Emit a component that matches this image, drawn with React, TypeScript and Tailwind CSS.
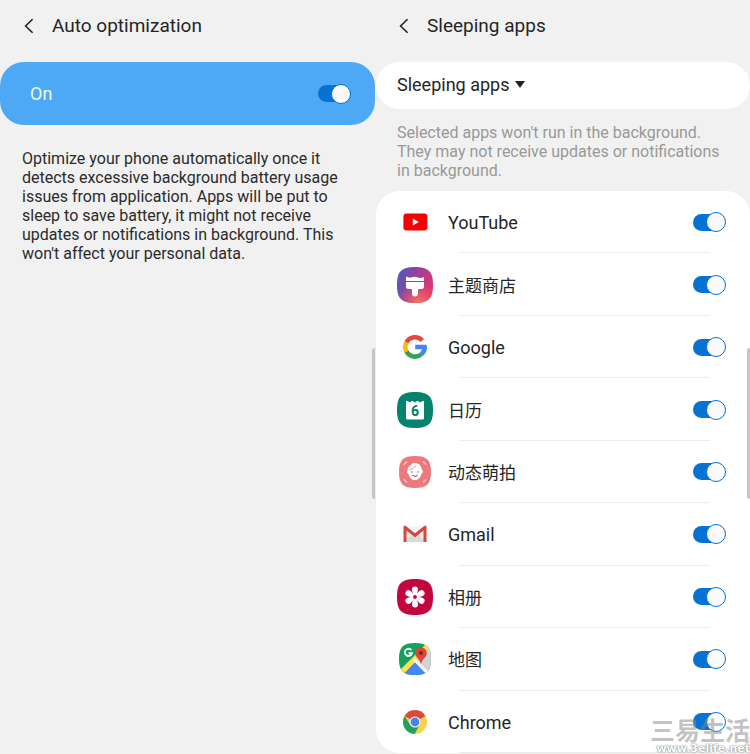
import type { ReactNode } from "react";

const CJK = "font-['Roboto','Noto_Sans_CJK_SC',sans-serif]";

function Toggle({ id, label }: { id: string; label: string }) {
  return (
    <span className="relative inline-flex h-5 w-[33px] shrink-0 items-center">
      <input
        id={id}
        type="checkbox"
        role="switch"
        aria-label={label}
        defaultChecked
        className="peer m-0 h-[17px] w-8 cursor-pointer appearance-none rounded-full bg-[#9a9a9a] checked:bg-[#0672d2]"
      />
      <span className="pointer-events-none absolute top-0 left-0 size-5 rounded-full border border-[#9a9a9a] bg-[#fafafa] peer-checked:right-0 peer-checked:left-auto peer-checked:border-[#0672d2]" />
    </span>
  );
}

function Header({ title }: { title: string }) {
  return (
    <header className="flex h-[62px] items-center gap-4 pb-[10px] pl-[22px]">
      <button type="button" aria-label="Back" className="flex size-[14px] items-center justify-center">
        <svg viewBox="0 0 14 16" className="h-4 w-[14px] shrink-0" fill="none" stroke="#222" strokeWidth="1.6">
          <path d="M10.6 1.2 3.6 8l7 6.8" />
        </svg>
      </button>
      <h1 className="text-[19px] leading-6 text-[#252525]">{title}</h1>
    </header>
  );
}

const SQUIRCLE = "M18 0C31.5 0 36 4.5 36 18S31.5 36 18 36 0 31.5 0 18 4.5 0 18 0Z";

function Icon({ children }: { children: ReactNode }) {
  return (
    <svg viewBox="0 0 36 36" className="size-9 shrink-0" aria-hidden="true">
      {children}
    </svg>
  );
}

const youtube = (
  <Icon>
    <rect x="6.400" y="9.600" width="24" height="16.800" rx="3.200" fill="#f80000" />
    <path d="M15.800 14.500v7l6-3.500Z" fill="#fff" />
  </Icon>
);

const themes = (
  <Icon>
    <defs>
      <linearGradient id="theme-a" x1="0" y1="0.2" x2="1" y2="0.6">
        <stop offset="0" stopColor="#4a5bbd" />
        <stop offset="0.5" stopColor="#a03f98" />
        <stop offset="1" stopColor="#e6366c" />
      </linearGradient>
      <radialGradient id="theme-b" cx="0.6" cy="1.02" r="0.6">
        <stop offset="0" stopColor="#ff7a55" />
        <stop offset="1" stopColor="#f0596a" stopOpacity="0" />
      </radialGradient>
    </defs>
    <path d={SQUIRCLE} fill="url(#theme-a)" />
    <path d={SQUIRCLE} fill="url(#theme-b)" />
    <path d="M9 9.500q3 1.800 6 .8t6 .2q3 1 6-.6v4H9Z" fill="#fff" />
    <path d="M9 15h18v4.500q0 2.500-2.500 2.500h-2.500q-1 0-1 1.200v3.400a3 3 0 0 1-6 0v-3.400q0-1.200-1-1.200h-2.500Q9 22 9 19.500Z" fill="#fff" />
  </Icon>
);

const google = (
  <Icon>
    <g fill="none" strokeWidth="4.600">
      <path d="M25.300 11.500A9.700 9.700 0 0 0 9.500 13.400" stroke="#e8453c" />
      <path d="M9.500 13.400a9.700 9.700 0 0 0 0 9.200" stroke="#fbbb0b" />
      <path d="M9.500 22.600a9.700 9.700 0 0 0 15 2.500" stroke="#34a353" />
      <path d="M24.500 25.100A9.300 9.300 0 0 0 27.600 18" stroke="#4286f3" />
    </g>
    <path d="M18.200 15.700h11.500q.3 2.400-.2 4.600H18.200Z" fill="#4286f3" />
  </Icon>
);

const calendar = (
  <Icon>
    <path d={SQUIRCLE} fill="#06836f" />
    <path d="M9 9h2a1.900 1.900 0 0 0 3.600 0h1.600a1.900 1.900 0 0 0 3.600 0h1.600a1.900 1.900 0 0 0 3.600 0h2v17q0 1.500-1.500 1.500h-15Q9 27.500 9 26Z" fill="#fff" />
    <text x="18" y="24" textAnchor="middle" fontSize="14" fontWeight="700" fontFamily="Roboto, sans-serif" fill="#087765">
      6
    </text>
  </Icon>
);

const emoji = (
  <Icon>
    <path transform="translate(2 2) scale(.889)" d={SQUIRCLE} fill="#ec7a7c" />
    <path d="M10.600 16.500C10.600 12 14 11.500 15.500 9.300c4.300-1 8.800.7 9.300 6.500 1.500 0 1.500 3.800-.3 4-1 4-3.500 6.300-6.500 6.300s-5.700-2.400-6.600-6.400c-1.600-.2-1.800-2.800-.8-3.200Z" fill="#fff" />
    <path d="M12 15.600c3-.3 6-2 7.300-4.500" fill="none" stroke="#ec7a7c" strokeWidth=".8" />
    <g fill="none" stroke="#9f4850" strokeWidth="1" strokeLinecap="round">
      <path d="M15 17.600v.8M21 17.600v.8M15.500 21.500q2.500 2 5 0" />
    </g>
    <path d="M6.800 10.600 10 7.600M26 7.600l3.200 3M6.800 25.400l3.200 3M26 28.400l3.200-3" stroke="#ffd5d3" strokeWidth="1.300" />
  </Icon>
);

const gmail = (
  <Icon>
    <path d="M7 10h22v16H7Z" fill="#e9e9e9" />
    <path d="m7 26 8.500-8 2.500 2 2.500-2 8.500 8Z" fill="#d9d9d9" />
    <path d="m8 10 10 8 10-8Z" fill="#f6f6f6" />
    <path d="M6.500 11q0-1.600 1.600-1.600L18 17.300l9.900-7.900q1.600 0 1.600 1.600v15h-3V14.600L18 21.300l-8.500-6.700V26h-3Z" fill="#d5473c" />
  </Icon>
);

const gallery = (
  <Icon>
    <path d={SQUIRCLE} fill="#c2063f" />
    {[0, 60, 120, 180, 240, 300].map((angle) => (
      <path key={angle} transform={`rotate(${angle} 18 18)`} d="M16.500 16.500c-.3-2.400-1.500-3.800-1.500-6.100a3 3 0 0 1 6 0c0 2.300-1.200 3.700-1.500 6.100Z" fill="#fff" />
    ))}
    <circle cx="18" cy="18" r="2.700" fill="#c2063f" stroke="#fff" strokeWidth="1.600" />
  </Icon>
);

const maps = (
  <Icon>
    <defs>
      <clipPath id="map-shape">
        <path transform="translate(2 2) scale(.889)" d={SQUIRCLE} />
      </clipPath>
    </defs>
    <g clipPath="url(#map-shape)">
      <path d="M0 0h36v36H0Z" fill="#15a05b" />
      <path d="M36 3v33L19 19Z" fill="#d3d3d3" />
      <path d="M0 32 32 0l3 4L5 35Z" fill="#f9de58" />
      <path d="m18 17 18 18-3 3-17-18Z" fill="#f4f4f4" />
      <path d="M4 36 18 21.500 32 36Z" fill="#4487f5" />
    </g>
    <path d="M14.400 9.200a3.600 3.600 0 1 0 .6 3h-3.400" fill="none" stroke="#fff" strokeWidth="1.900" />
    <path d="M24 6.200a5.800 5.800 0 0 1 5.800 5.800c0 4.500-4.800 5.500-5.800 11.500-1-6-5.800-7-5.800-11.500A5.800 5.800 0 0 1 24 6.200Z" fill="#da4638" />
    <circle cx="24" cy="12" r="2.100" fill="#7d2822" />
  </Icon>
);

const chrome = (
  <Icon>
    <circle cx="18" cy="18" r="12" fill="#fbd04b" />
    <path d="M18 18 7.600 12A12 12 0 0 1 28.400 12Z" fill="#d94b3e" />
    <path d="M7.600 12A12 12 0 0 0 17.500 30l5.300-9.300L13 20.500Z" fill="#22a060" />
    <circle cx="18" cy="18" r="5.600" fill="#f5f5f5" />
    <circle cx="18" cy="18" r="4.400" fill="#4586ef" />
  </Icon>
);

const LATIN_NAME = "text-lg leading-6";
const CHINESE_NAME = "text-[17px] leading-6";

const apps: { id: string; name: string; size: string; icon: ReactNode }[] = [
  { id: "youtube", name: "YouTube", size: LATIN_NAME, icon: youtube },
  { id: "themes", name: "主题商店", size: CHINESE_NAME, icon: themes },
  { id: "google", name: "Google", size: LATIN_NAME, icon: google },
  { id: "calendar", name: "日历", size: CHINESE_NAME, icon: calendar },
  { id: "emoji", name: "动态萌拍", size: CHINESE_NAME, icon: emoji },
  { id: "gmail", name: "Gmail", size: LATIN_NAME, icon: gmail },
  { id: "gallery", name: "相册", size: CHINESE_NAME, icon: gallery },
  { id: "maps", name: "地图", size: CHINESE_NAME, icon: maps },
  { id: "chrome", name: "Chrome", size: LATIN_NAME, icon: chrome },
];

function ScrollBar() {
  return <div className="absolute top-[348px] right-0 h-[151px] w-[3px] rounded-l bg-[#c9c3c1]" />;
}

function AutoOptimization() {
  return (
    <section className="relative">
      <Header title="Auto optimization" />
      <div className="flex h-[63px] items-center justify-between rounded-[24px] bg-[#4da9f5] pr-6 pl-[30px]">
        <label htmlFor="auto" className="text-lg text-[#edf8ff]">
          On
        </label>
        <Toggle id="auto" label="Auto optimization" />
      </div>
      <p className="mt-6 pr-6 pl-[22px] text-base leading-[19px] text-[#2b2b2b]">
        Optimize your phone automatically once it detects excessive background battery usage issues from application.
        Apps will be put to sleep to save battery, it might not receive updates or notifications in background. This
        won't affect your personal data.
      </p>
      <ScrollBar />
    </section>
  );
}

function SleepingApps() {
  return (
    <section className="relative">
      <Header title="Sleeping apps" />
      <div className="ml-px flex h-[47px] items-center rounded-[24px] bg-white pb-0.5 pl-[21px]">
        <div className="relative flex items-center">
          <select aria-label="App list" className="field-sizing-content cursor-pointer appearance-none bg-transparent pr-4 text-lg text-[#252525]">
            <option>Sleeping apps</option>
            <option>Deep sleeping apps</option>
          </select>
          <svg viewBox="0 0 10 7" className="pointer-events-none absolute right-0 h-[7px] w-[10px]" fill="#222" aria-hidden="true">
            <path d="M0 0h10L5 7Z" />
          </svg>
        </div>
      </div>
      <p className="mt-[14px] pr-5 pl-[22px] text-base leading-[19px] text-[#999]">
        Selected apps won't run in the background. They may not receive updates or notifications in background.
      </p>
      <ul className="mt-[11px] ml-px grid h-[562px] auto-rows-fr rounded-[24px] bg-white">
        {apps.map((app) => (
          <li key={app.id} className="relative flex items-center pr-6 pl-[21px]">
            {app.icon}
            <label htmlFor={app.id} className={`ml-[15px] flex-1 pt-0.5 text-[#252525] ${app.size}`}>
              {app.name}
            </label>
            <Toggle id={app.id} label={app.name} />
            <span className="absolute right-10 bottom-0 left-[83px] h-px bg-[#ececec]" />
          </li>
        ))}
      </ul>
      <ScrollBar />
    </section>
  );
}

export default function App() {
  return (
    <main className={`relative grid min-h-screen grid-cols-2 overflow-hidden bg-[#f1f1f1] ${CJK}`}>
      <AutoOptimization />
      <SleepingApps />
      <div className="pointer-events-none absolute right-0 bottom-0 flex flex-col items-end whitespace-nowrap">
        <span className="text-[25px] leading-6 font-bold text-[#888]/50">三易生活</span>
        <span className="font-['DejaVu_Sans',sans-serif] text-[11px] leading-[10px] font-bold text-white [text-shadow:0_0_2px_#777,0_0_1px_#777]">
          www.3elife.net
        </span>
      </div>
    </main>
  );
}
